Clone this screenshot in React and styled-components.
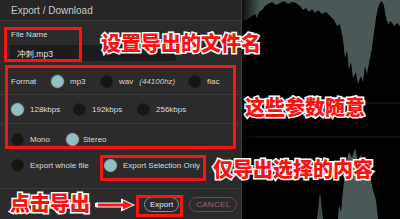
import React from 'react'
import styled, { createGlobalStyle } from 'styled-components'

const GlobalStyle = createGlobalStyle`
  html, body {
    margin: 0;
    padding: 0;
    background: #000;
  }
  #root {
    width: 400px;
    height: 219px;
  }
`

const Screen = styled('div')`
  position: relative;
  display: flex;
  width: 400px;
  height: 219px;
  overflow: hidden;
  background: #000;
  font-family: 'Liberation Sans', Arial, 'Noto Sans CJK SC', sans-serif;
`

const Dialog = styled('div')`
  display: flex;
  flex-direction: column;
  width: 242px;
  flex: none;
  background: #2b2b2b;
  border-right: 1px solid #3b3b3b;
  box-sizing: border-box;
  color: #d9d9d9;
  font-size: 8px;
`

const Header = styled('div')`
  display: flex;
  align-items: center;
  height: 21px;
  padding: 0 11px;
  box-sizing: border-box;
  background: #262626;
  border-bottom: 1px solid #3a3a3a;
  color: #c9c9c9;
  font-size: 10px;
`

const FileSection = styled('div')`
  display: flex;
  flex-direction: column;
  padding: 8px 10px 0 10px;
`

const FieldLabel = styled('div')`
  line-height: 11px;
  padding-left: 1px;
  color: #dcdcdc;
`

const FileInput = styled('div')`
  display: flex;
  align-items: center;
  width: 166px;
  height: 16px;
  margin-top: 5px;
  padding-left: 7px;
  box-sizing: border-box;
  background: #1c1c1c;
  border-radius: 2px;
  color: #e6e6e6;
  font-size: 8.5px;
  font-family: 'Liberation Sans', 'Noto Sans CJK SC', sans-serif;
`

const Options = styled('div')`
  display: flex;
  flex-direction: column;
  margin-top: 8px;
`

const Row = styled('div')`
  display: flex;
  align-items: center;
  height: ${p => p.$h}px;
  padding: 0 11px ${p => p.$pb || 0}px 11px;
  box-sizing: border-box;
  border-bottom: ${p => (p.$line ? '1px solid #3a3a3a' : 'none')};
`

const RowLabel = styled('span')`
  width: 40px;
  color: #dcdcdc;
`

const Option = styled('label')`
  display: flex;
  align-items: center;
  gap: ${p => p.$gap || 6}px;
  width: ${p => (p.$w ? `${p.$w}px` : 'auto')};
  flex: none;
  white-space: nowrap;
  color: #dcdcdc;
`

const Radio = styled('span')`
  display: inline-block;
  width: 13px;
  height: 13px;
  border-radius: 50%;
  box-sizing: border-box;
  background: ${p => (p.$on ? '#8ec0c6' : '#161616')};
  border: 1px solid ${p => (p.$on ? '#9aa8aa' : '#1d1d1d')};
  box-shadow: ${p => (p.$on ? '0 0 0 1px #3d3d3d' : 'none')};
`

const Hint = styled('i')`
  color: #cfcfcf;
`

const Footer = styled('div')`
  display: flex;
  align-items: center;
  gap: 10px;
  flex: 1;
  padding-left: 144px;
`

const Pill = styled('button')`
  height: 15px;
  padding: 0 ${p => (p.$danger ? 6 : 5)}px;
  border-radius: 8px;
  background: transparent;
  border: 1px solid ${p => (p.$danger ? '#7e4444' : '#6f9a9c')};
  color: ${p => (p.$danger ? '#a86464' : '#ececec')};
  font-family: 'Liberation Sans', Arial, sans-serif;
  font-size: 8px;
  line-height: 13px;
  letter-spacing: ${p => (p.$danger ? '0.3px' : '0')};
`

const Wave = styled('div')`
  position: relative;
  flex: 1;
  background: #000;
  svg {
    display: block;
  }
  &::before {
    content: '';
    position: absolute;
    inset: 0 auto 0 0;
    width: 18px;
    background: linear-gradient(to right, rgba(0, 0, 0, 0.85), rgba(0, 0, 0, 0));
  }
`

const Annotations = styled('div')`
  position: absolute;
  inset: 0;
  pointer-events: none;
`

const Mark = styled('div')`
  position: absolute;
  left: ${p => p.$x}px;
  top: ${p => p.$y}px;
  width: ${p => p.$w}px;
  height: ${p => p.$h}px;
  border: 3px solid #ff1212;
  box-sizing: border-box;
`

const Note = styled('div')`
  position: absolute;
  left: ${p => p.$x}px;
  top: ${p => p.$y}px;
  font-family: 'Noto Sans CJK SC', sans-serif;
  font-weight: 900;
  font-size: 20px;
  line-height: 20px;
  white-space: nowrap;
  color: #ff1010;
  -webkit-text-stroke: 3px #fff;
  paint-order: stroke fill;
`

const Arrow = styled('svg')`
  position: absolute;
  left: 95px;
  top: 198px;
`

const rel = pts => pts.map(([x, y]) => `${x - 242},${y}`).join(' ')

const topEdge = [
  [242, 0], [242, 22], [246, 20], [249, 18], [252, 16], [255, 14], [257, 18], [259, 12],
  [262, 10], [265, 6], [268, 4], [272, 2], [276, 5], [280, 3], [284, 1], [288, 4],
  [292, 2], [296, 3], [300, 6], [303, 10], [306, 8], [309, 12], [312, 9], [315, 13],
  [318, 10], [322, 14], [326, 12], [330, 16], [334, 20], [337, 26], [340, 24], [343, 40],
  [345, 58], [347, 50], [349, 70], [351, 62], [353, 78], [356, 72], [358, 84], [361, 76],
  [363, 82], [365, 66], [367, 74], [370, 58], [372, 48], [374, 32], [376, 18], [378, 8],
  [380, 3], [382, 1], [384, 6], [386, 18], [388, 24], [391, 21], [394, 26], [397, 23],
  [400, 26], [400, 0]
]

const bottomEdge = [
  [338, 219], [339, 205], [341, 212], [343, 190], [345, 175], [347, 160], [349, 152],
  [352, 158], [355, 148], [358, 162], [361, 154], [364, 170], [367, 160], [370, 176],
  [373, 190], [376, 200], [378, 219]
]

const spike = [[317, 219], [320, 192], [323, 219]]

const App = () => {
  return (
    <Screen>
      <GlobalStyle />
      <Dialog>
        <Header>Export / Download</Header>
        <FileSection>
          <FieldLabel>File Name</FieldLabel>
          <FileInput>冲刺.mp3</FileInput>
        </FileSection>
        <Options>
          <Row $h={26} $line>
            <RowLabel>Format</RowLabel>
            <Option $w={49}><Radio $on />mp3</Option>
            <Option $w={88}><Radio />wav <Hint>(44100hz)</Hint></Option>
            <Option><Radio />flac</Option>
          </Row>
          <Row $h={29} $line>
            <Option $w={62}><Radio $on />128kbps</Option>
            <Option $w={64}><Radio />192kbps</Option>
            <Option><Radio />256kbps</Option>
          </Row>
          <Row $h={30}>
            <Option $w={55}><Radio />Mono</Option>
            <Option $gap={4}><Radio $on />Stereo</Option>
          </Row>
          <Row $h={35} $pb={11} $line>
            <Option $w={93}><Radio />Export whole file</Option>
            <Option><Radio $on />Export Selection Only</Option>
          </Row>
        </Options>
        <Footer>
          <Pill>Export</Pill>
          <Pill $danger>CANCEL</Pill>
        </Footer>
      </Dialog>
      <Wave>
        <svg width="158" height="219" viewBox="0 0 158 219">
          <rect x="0" y="0" width="158" height="219" fill="#000" />
          <line x1="0" y1="103" x2="158" y2="103" stroke="#222" strokeWidth="1" />
          <line x1="0" y1="137" x2="158" y2="137" stroke="#222" strokeWidth="1" />
          <polygon points={rel(topEdge)} fill="#4a5957" />
          <polygon points={rel(bottomEdge)} fill="#4a5957" />
          <polygon points={rel(spike)} fill="#3f4c4a" />
        </svg>
      </Wave>
      <Annotations>
        <Mark $x={4} $y={27} $w={78} $h={35} />
        <Mark $x={5} $y={65} $w={231} $h={84} />
        <Mark $x={100} $y={155} $w={106} $h={26} />
        <Mark $x={136} $y={195} $w={47} $h={22} />
        <Note $x={101} $y={33}>设置导出的文件名</Note>
        <Note $x={245} $y={97}>这些参数随意</Note>
        <Note $x={213} $y={159}>仅导出选择的内容</Note>
        <Note $x={10} $y={193}>点击导出</Note>
        <Arrow width="42" height="14" viewBox="0 0 42 14">
          <line x1="2" y1="7" x2="30" y2="7" stroke="#fff" strokeWidth="5" strokeLinecap="round" />
          <polygon points="26,0.5 40,7 26,13.5" fill="#fff" />
          <line x1="3" y1="7" x2="30" y2="7" stroke="#ff1212" strokeWidth="3" />
          <polygon points="28,2.5 38,7 28,11.5" fill="#ff1212" />
        </Arrow>
      </Annotations>
    </Screen>
  )
}

export default App
